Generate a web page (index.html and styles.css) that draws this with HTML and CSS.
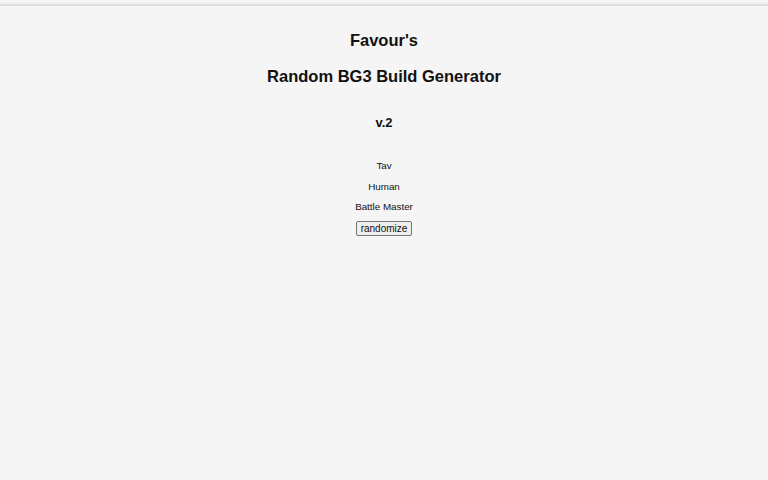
FILE: index.html
```html
<!DOCTYPE html>
<html>
<head>
<meta charset="utf-8">
<link rel="stylesheet" href="styles.css">
</head>
<body>
<div class="topbar"></div>
<main class="app">
  <h1 class="title">Favour's</h1>
  <h1 class="title sub">Random BG3 Build Generator</h1>
  <h2 class="version">v.2</h2>
  <p class="line first">Tav</p>
  <p class="line">Human</p>
  <p class="line">Battle Master</p>
  <button class="btn">randomize</button>
</main>
</body>
</html>
```
FILE: styles.css
```css
html, body {
  margin: 0;
  padding: 0;
  background: #f5f5f5;
  font-family: "Liberation Sans", Arial, sans-serif;
  color: #111;
}
.topbar {
  height: 1px;
  margin-top: 3px;
  border-top: 1px solid #ececec;
  border-bottom: 1px solid #d9d9d9;
  background: #e4e4e4;
}
.app {
  display: flex;
  flex-direction: column;
  align-items: center;
  text-align: center;
}
.title {
  font-size: 16.5px;
  font-weight: bold;
  margin: 0;
  line-height: 18px;
}
.title:first-child { margin-top: 25px; }
.sub { margin-top: 18px; }
.version {
  font-size: 13px;
  font-weight: bold;
  margin: 30px 0 0;
  line-height: 15px;
}
.line {
  font-size: 9.8px;
  margin: 8.5px 0 0;
  line-height: 12px;
  color: #111;
}
.line.first { margin-top: 30px; }
.btn {
  margin-top: 8px;
  font-family: "Liberation Sans", Arial, sans-serif;
  font-size: 10px;
  padding: 1px 4px;
  background: #efefef;
  border: 1px solid #767676;
  border-radius: 2px;
  color: #111;
}
```
